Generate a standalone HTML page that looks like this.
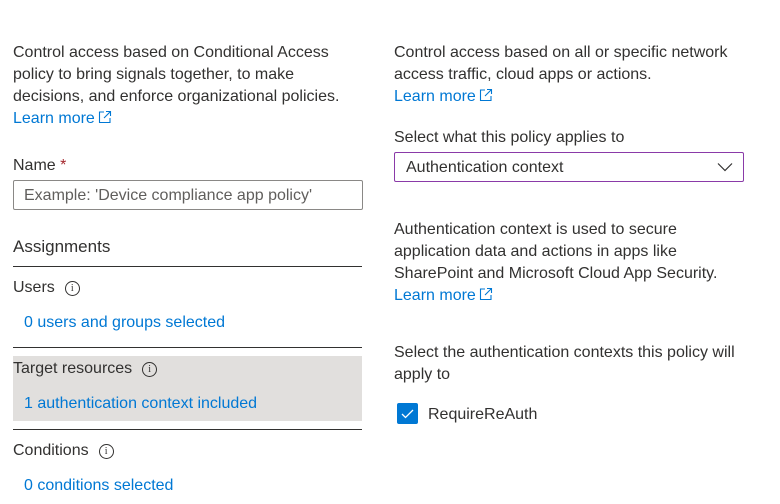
<!DOCTYPE html>
<html><head><style>
body{margin:0;width:780px;height:504px;background:#fff;font-family:"Liberation Sans",sans-serif;font-size:16px;color:#323130;position:relative;overflow:hidden}
.t{position:absolute;line-height:22px;white-space:nowrap}
a,.l{color:#0078d4;text-decoration:none}
.hr{position:absolute;left:13px;width:349px;height:1px;background:#323130}
.i{display:inline-block;width:13px;height:13px;border:1px solid #323130;border-radius:50%;font-size:10px;line-height:13px;text-align:center;vertical-align:1px;margin-left:10px;font-family:"Liberation Serif",serif}
.ext{display:inline-block;vertical-align:-1px;margin-left:3px}
</style></head><body>
<div class="t" style="left:13px;top:42px">Control access based on Conditional Access<br>policy to bring signals together, to make<br>decisions, and enforce organizational policies.<br><span class="l">Learn more<svg class="ext" width="14" height="14" viewBox="0 0 14 14"><path d="M6 2H1.5v10.5H12V8M8 1.5h4.5V6M12.5 1.5L6 8" fill="none" stroke="#0078d4" stroke-width="1.1"/></svg></span></div>
<div class="t" style="left:13px;top:155px">Name <span style="color:#a4262c">*</span></div>
<div style="position:absolute;left:13px;top:180px;width:348px;height:28px;border:1px solid #8a8886;border-radius:2px"></div>
<div class="t" style="left:24px;top:185px;color:#605e5c">Example: 'Device compliance app policy'</div>
<div class="t" style="left:13px;top:236px;font-size:17px">Assignments</div>
<div class="hr" style="top:266px"></div>
<div class="t" style="left:13px;top:277px">Users<span class="i">i</span></div>
<div class="t l" style="left:24px;top:312px">0 users and groups selected</div>
<div class="hr" style="top:347px"></div>
<div style="position:absolute;left:13px;top:356px;width:349px;height:65px;background:#e1dfdd"></div>
<div class="t" style="left:13px;top:358px">Target resources<span class="i">i</span></div>
<div class="t l" style="left:24px;top:393px">1 authentication context included</div>
<div class="hr" style="top:429px"></div>
<div class="t" style="left:13px;top:440px">Conditions<span class="i">i</span></div>
<div class="t l" style="left:24px;top:475px">0 conditions selected</div>

<div class="t" style="left:394px;top:42px">Control access based on all or specific network<br>access traffic, cloud apps or actions.<br><span class="l">Learn more<svg class="ext" width="14" height="14" viewBox="0 0 14 14"><path d="M6 2H1.5v10.5H12V8M8 1.5h4.5V6M12.5 1.5L6 8" fill="none" stroke="#0078d4" stroke-width="1.1"/></svg></span></div>
<div class="t" style="left:394px;top:127px">Select what this policy applies to</div>
<div style="position:absolute;left:394px;top:152px;width:348px;height:28px;border:1px solid #8a3aa8;border-radius:2px"></div>
<div class="t" style="left:406px;top:157px">Authentication context</div>
<svg style="position:absolute;left:717px;top:162px" width="16" height="10" viewBox="0 0 16 10"><path d="M1 1.5l7 7 7-7" fill="none" stroke="#323130" stroke-width="1.2"/></svg>
<div class="t" style="left:394px;top:219px">Authentication context is used to secure<br>application data and actions in apps like<br>SharePoint and Microsoft Cloud App Security.<br><span class="l">Learn more<svg class="ext" width="14" height="14" viewBox="0 0 14 14"><path d="M6 2H1.5v10.5H12V8M8 1.5h4.5V6M12.5 1.5L6 8" fill="none" stroke="#0078d4" stroke-width="1.1"/></svg></span></div>
<div class="t" style="left:394px;top:342px">Select the authentication contexts this policy will<br>apply to</div>
<div style="position:absolute;left:397px;top:403px;width:21px;height:21px;background:#0078d4;border-radius:2px"></div>
<svg style="position:absolute;left:397px;top:403px" width="21" height="21" viewBox="0 0 21 21"><path d="M5 11l3.5 3.5L16 7" fill="none" stroke="#fff" stroke-width="1.3"/></svg>
<div class="t" style="left:428px;top:404px">RequireReAuth</div>
</body></html>
